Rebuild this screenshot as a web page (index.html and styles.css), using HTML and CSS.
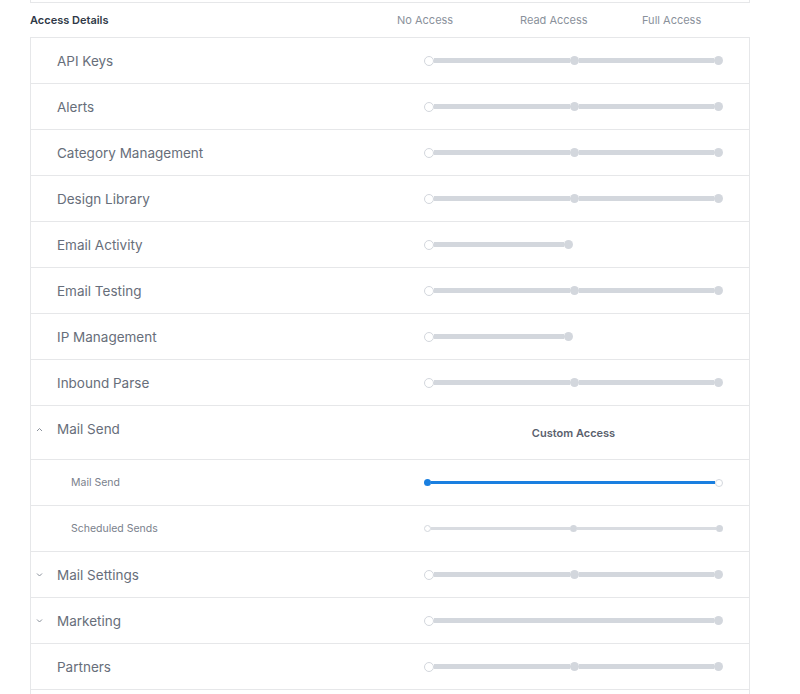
FILE: index.html
```html
<!DOCTYPE html>
<html>
<head>
<meta charset="utf-8">
<link rel="stylesheet" href="styles.css">
</head>
<body>
<div class="page">
  <div class="prev-box"></div>
  <div class="head">
    <div class="head-title">Access Details</div>
    <div class="head-col">No Access</div>
    <div class="head-col">Read Access</div>
    <div class="head-col">Full Access</div>
  </div>
  <div class="table">
    <div class="row"><div class="label">API Keys</div><div class="ctrl"><div class="slider"><span class="dot start"></span><span class="seg"></span><span class="dot"></span><span class="seg"></span><span class="dot"></span></div></div></div>
    <div class="row"><div class="label">Alerts</div><div class="ctrl"><div class="slider"><span class="dot start"></span><span class="seg"></span><span class="dot"></span><span class="seg"></span><span class="dot"></span></div></div></div>
    <div class="row"><div class="label">Category Management</div><div class="ctrl"><div class="slider"><span class="dot start"></span><span class="seg"></span><span class="dot"></span><span class="seg"></span><span class="dot"></span></div></div></div>
    <div class="row"><div class="label">Design Library</div><div class="ctrl"><div class="slider"><span class="dot start"></span><span class="seg"></span><span class="dot"></span><span class="seg"></span><span class="dot"></span></div></div></div>
    <div class="row"><div class="label">Email Activity</div><div class="ctrl"><div class="slider two"><span class="dot start"></span><span class="seg"></span><span class="dot"></span></div></div></div>
    <div class="row"><div class="label">Email Testing</div><div class="ctrl"><div class="slider"><span class="dot start"></span><span class="seg"></span><span class="dot"></span><span class="seg"></span><span class="dot"></span></div></div></div>
    <div class="row"><div class="label">IP Management</div><div class="ctrl"><div class="slider two"><span class="dot start"></span><span class="seg"></span><span class="dot"></span></div></div></div>
    <div class="row"><div class="label">Inbound Parse</div><div class="ctrl"><div class="slider"><span class="dot start"></span><span class="seg"></span><span class="dot"></span><span class="seg"></span><span class="dot"></span></div></div></div>
    <div class="row parent"><div class="label"><span class="caret"><svg width="7" height="5" viewBox="0 0 7 5"><polyline points="1,4 3.5,1.5 6,4" fill="none" stroke="#8a919b" stroke-width="1"/></svg></span>Mail Send</div><div class="ctrl custom">Custom Access</div></div>
    <div class="row sub"><div class="label">Mail Send</div><div class="ctrl"><div class="slider blue"><span class="dot bstart"></span><span class="seg bseg"></span><span class="dot bend"></span></div></div></div>
    <div class="row sub"><div class="label">Scheduled Sends</div><div class="ctrl"><div class="slider thin"><span class="dot start"></span><span class="seg"></span><span class="dot"></span><span class="seg"></span><span class="dot"></span></div></div></div>
    <div class="row"><div class="label"><span class="caret"><svg width="7" height="5" viewBox="0 0 7 5"><polyline points="1,1.5 3.5,4 6,1.5" fill="none" stroke="#8a919b" stroke-width="1"/></svg></span>Mail Settings</div><div class="ctrl"><div class="slider"><span class="dot start"></span><span class="seg"></span><span class="dot"></span><span class="seg"></span><span class="dot"></span></div></div></div>
    <div class="row"><div class="label"><span class="caret"><svg width="7" height="5" viewBox="0 0 7 5"><polyline points="1,1.5 3.5,4 6,1.5" fill="none" stroke="#8a919b" stroke-width="1"/></svg></span>Marketing</div><div class="ctrl"><div class="slider"><span class="dot start"></span><span class="seg"></span><span class="dot"></span></div></div></div>
    <div class="row"><div class="label">Partners</div><div class="ctrl"><div class="slider"><span class="dot start"></span><span class="seg"></span><span class="dot"></span><span class="seg"></span><span class="dot"></span></div></div></div>
    <div class="row empty"></div>
  </div>
</div>
</body>
</html>
```

FILE: styles.css
```css
* { box-sizing: border-box; }
html, body { margin: 0; padding: 0; background: #ffffff; }
body {
  font-family: Inter, "Noto Sans", "Liberation Sans", sans-serif;
  color: #646b77;
  overflow: hidden;
}
.page {
  width: 800px;
  padding-left: 30px;
}
.prev-box {
  width: 720px;
  height: 3px;
  border: 1px solid #e6e7e9;
  border-top: none;
}
.head {
  display: grid;
  grid-template-columns: 367px 123px 122px 1fr;
  align-items: center;
  height: 34px;
  width: 720px;
}
.head-title {
  font-size: 11px;
  font-weight: 600;
  color: #2f3947;
}
.head-col {
  font-size: 11px;
  color: #8a919b;
}
.table {
  width: 720px;
  border: 1px solid #e6e7e9;
  border-bottom: none;
}
.row {
  display: flex;
  align-items: center;
  height: 46px;
  border-bottom: 1px solid #e6e7e9;
}
.row.parent {
  height: 54px;
  align-items: stretch;
}
.label {
  flex: 1;
  padding-left: 26px;
  font-size: 13.5px;
  color: #676e7a;
  display: flex;
  align-items: center;
}
.row.parent .label {
  height: 46px;
}
.row.sub .label {
  padding-left: 40px;
  font-size: 10.5px;
  color: #7a818c;
}
.caret {
  display: inline-flex;
  width: 21px;
  margin-left: -21px;
  padding-left: 0;
  align-items: center;
}
.ctrl {
  width: 299px;
  margin-right: 26px;
}
.ctrl.custom {
  display: flex;
  align-items: center;
  justify-content: center;
  font-size: 11px;
  font-weight: 600;
  color: #5a616d;
}
.slider {
  display: flex;
  align-items: center;
  width: 299px;
}
.slider.two { width: 149px; }
.dot {
  width: 9px;
  height: 9px;
  border-radius: 50%;
  background: #d3d7dd;
  flex: none;
}
.dot.start {
  width: 10px;
  height: 10px;
  background: #ffffff;
  border: 1px solid #d3d7dd;
}
.seg {
  flex: 1;
  height: 5px;
  background: #d3d7dd;
}
.slider.thin .dot { width: 7px; height: 7px; }
.slider.thin .seg { height: 2.5px; background: #d9dce1; }
.slider.thin .dot.start { width: 7px; height: 7px; }
.dot.bstart {
  width: 7px;
  height: 7px;
  background: #1a7fe0;
}
.seg.bseg {
  height: 3px;
  background: #1a7fe0;
}
.dot.bend {
  width: 8px;
  height: 8px;
  background: #ffffff;
  border: 1px solid #d3d7dd;
}
```
